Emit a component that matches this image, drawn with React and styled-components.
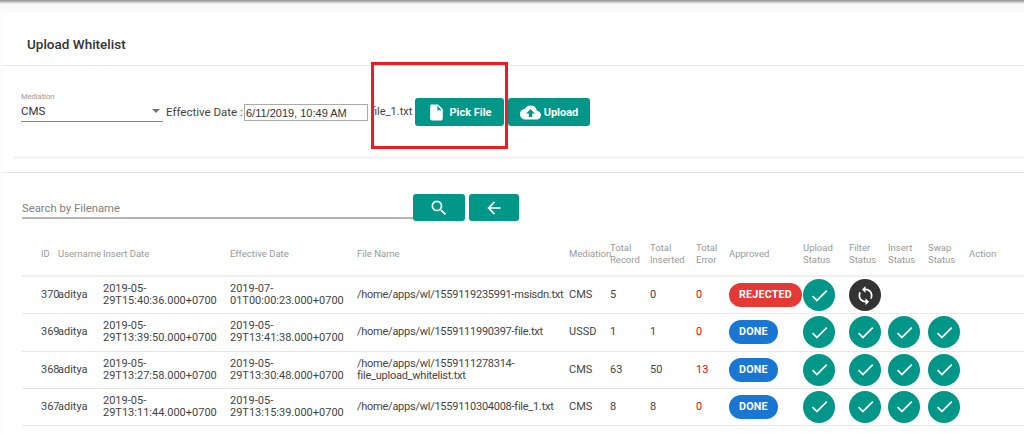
import React from "react";
import styled, { createGlobalStyle } from "styled-components";
import { MdArrowBack, MdCheck, MdSearch, MdSync, MdInsertDriveFile, MdCloudUpload } from "react-icons/md";

const GlobalStyle = createGlobalStyle`
  html, body {
    margin: 0;
    padding: 0;
    background: #fafafa;
    font-family: Roboto, "Liberation Sans", sans-serif;
    color: #333;
    overflow: hidden;
  }
`;

const columns = "19px 17px 45px 127px 127px 212px 41px 40px 46px 33px 74px 46px 39px 40px 41px 1fr";

const rows = [
  { id: 370, insert: ["2019-05-", "29T15:40:36.000+0700"], effective: ["2019-07-", "01T00:00:23.000+0700"], file: ["/home/apps/wl/1559119235991-msisdn.txt"], med: "CMS", record: 5, inserted: 0, error: 0, approved: "REJECTED", statuses: ["ok", "sync"] },
  { id: 369, insert: ["2019-05-", "29T13:39:50.000+0700"], effective: ["2019-05-", "29T13:41:38.000+0700"], file: ["/home/apps/wl/1559111990397-file.txt"], med: "USSD", record: 1, inserted: 1, error: 0, approved: "DONE", statuses: ["ok", "ok", "ok", "ok"] },
  { id: 368, insert: ["2019-05-", "29T13:27:58.000+0700"], effective: ["2019-05-", "29T13:30:48.000+0700"], file: ["/home/apps/wl/1559111278314-", "file_upload_whitelist.txt"], med: "CMS", record: 63, inserted: 50, error: 13, approved: "DONE", statuses: ["ok", "ok", "ok", "ok"] },
  { id: 367, insert: ["2019-05-", "29T13:11:44.000+0700"], effective: ["2019-05-", "29T13:15:39.000+0700"], file: ["/home/apps/wl/1559110304008-file_1.txt"], med: "CMS", record: 8, inserted: 8, error: 0, approved: "DONE", statuses: ["ok", "ok", "ok", "ok"] },
];

const headers = [
  ["ID"], ["Username"], ["Insert Date"], ["Effective Date"], ["File Name"], ["Mediation"],
  ["Total", "Record"], ["Total", "Inserted"], ["Total", "Error"], ["Approved"],
  ["Upload", "Status"], ["Filter", "Status"], ["Insert", "Status"], ["Swap", "Status"], ["Action"],
];

function Lines({ items }) {
  return items.map((line) => <Line key={line}>{line}</Line>);
}

export default function App() {
  return (
    <Page>
      <GlobalStyle />
      <Card>
        <Title>Upload Whitelist</Title>
        <FilterRow>
          <SelectField>
            <SelectLabel>Mediation</SelectLabel>
            <SelectValue>
              CMS
              <Caret />
            </SelectValue>
          </SelectField>
          <DateLabel>Effective Date :</DateLabel>
          <DateInput readOnly value="6/11/2019, 10:49 AM" />
          <FileName>file_1.txt</FileName>
          <ActionButton $width={89}>
            <MdInsertDriveFile size={19} />
            Pick File
          </ActionButton>
          <ActionButton $width={82}>
            <MdCloudUpload size={21} />
            Upload
          </ActionButton>
          <Highlight />
        </FilterRow>
        <Strip />
        <SearchRow>
          <SearchField>Search by Filename</SearchField>
          <IconButton $width={52}>
            <MdSearch size={20} />
          </IconButton>
          <IconButton $width={50}>
            <MdArrowBack size={20} />
          </IconButton>
        </SearchRow>
        <Table>
          <HeadRow>
            <span />
            {headers.map((h) => (
              <HeadCell key={h.join()}>
                <Lines items={h} />
              </HeadCell>
            ))}
          </HeadRow>
          {rows.map((r) => (
            <Row key={r.id}>
              <span />
              <Cell>{r.id}</Cell>
              <Cell>aditya</Cell>
              <Cell><Lines items={r.insert} /></Cell>
              <Cell><Lines items={r.effective} /></Cell>
              <FileCell><Lines items={r.file} /></FileCell>
              <Cell>{r.med}</Cell>
              <Cell>{r.record}</Cell>
              <Cell>{r.inserted}</Cell>
              <ErrorCell>{r.error}</ErrorCell>
              <Cell>
                <Badge $rejected={r.approved === "REJECTED"}>{r.approved}</Badge>
              </Cell>
              {[0, 1, 2, 3].map((i) => (
                <Cell key={i}>
                  {r.statuses[i] && (
                    <StatusIcon $sync={r.statuses[i] === "sync"}>
                      {r.statuses[i] === "sync" ? <MdSync size={21} /> : <MdCheck size={21} />}
                    </StatusIcon>
                  )}
                </Cell>
              ))}
              <Cell />
            </Row>
          ))}
        </Table>
      </Card>
    </Page>
  );
}

const Page = styled.div`
  height: 433px;
  box-sizing: border-box;
  padding: 12px 0 0 1px;
  overflow: hidden;
  background: linear-gradient(#8e8e8e, #c4c4c4 2px, #fafafa 4px) no-repeat;
  background-size: 100% 4px;
`;

const Card = styled.div`
  background: #fff;
  height: 100%;
`;

const Title = styled.div`
  height: 54px;
  box-sizing: border-box;
  padding: 25px 0 0 26px;
  font-size: 13.5px;
  line-height: 15px;
  font-weight: 500;
  color: #333;
  border-bottom: 1px solid #e8e8e8;
`;

const FilterRow = styled.div`
  position: relative;
  height: 90px;
  box-sizing: border-box;
  padding: 26px 0 0 20px;
  display: flex;
  align-items: flex-start;
`;

const SelectField = styled.div`
  width: 142px;
  margin-right: 3px;
`;

const SelectLabel = styled.div`
  font-size: 7.5px;
  line-height: 10px;
  color: #999;
`;

const SelectValue = styled.div`
  height: 20px;
  display: flex;
  justify-content: space-between;
  align-items: center;
  font-size: 11.5px;
  color: #333;
  border-bottom: 1px solid #888;
  padding-bottom: 1px;
  box-sizing: border-box;
`;

const Caret = styled.span`
  width: 0;
  height: 0;
  margin-right: 3px;
  border-left: 4px solid transparent;
  border-right: 4px solid transparent;
  border-top: 4px solid #757575;
`;

const DateLabel = styled.div`
  margin-top: 12px;
  font-size: 11.5px;
  line-height: 16px;
  color: #444;
  width: 78px;
  white-space: nowrap;
`;

const DateInput = styled.input`
  width: 124px;
  height: 17px;
  margin-top: 12px;
  box-sizing: border-box;
  border: 1px solid #aaa;
  padding: 0 1px;
  font-family: "Liberation Sans", Arial, sans-serif;
  font-size: 11px;
  color: #333;
  outline: none;
`;

const FileName = styled.div`
  margin: 12px 3px 0 3px;
  width: 41px;
  font-size: 11px;
  line-height: 16px;
  color: #444;
  white-space: nowrap;
`;

const ActionButton = styled.button`
  width: ${(p) => p.$width}px;
  height: 28px;
  margin: 6px 4px 0 0;
  padding: 0;
  display: flex;
  align-items: center;
  justify-content: center;
  gap: 3px;
  border: none;
  border-radius: 3px;
  background: #009688;
  color: #fff;
  font-family: Roboto, sans-serif;
  font-size: 11px;
  font-weight: 700;
`;

const Highlight = styled.div`
  position: absolute;
  left: 370px;
  top: -4px;
  width: 137px;
  height: 87px;
  box-sizing: border-box;
  border: 3px solid #ed1c24;
  pointer-events: none;
`;

const Strip = styled.div`
  height: 19px;
  box-sizing: border-box;
  margin-left: 13px;
  border-top: 3px solid #f5f5f5;
  position: relative;

  &::after {
    content: "";
    position: absolute;
    left: -13px;
    right: 0;
    top: 13px;
    border-top: 1px solid #e8e8e8;
  }
`;

const SearchRow = styled.div`
  height: 27px;
  margin-top: 19px;
  padding-left: 21px;
  display: flex;
  align-items: flex-start;
  gap: 4px;
`;

const SearchField = styled.div`
  width: 391px;
  height: 25px;
  margin-right: -4px;
  box-sizing: border-box;
  padding-top: 7px;
  font-size: 11.3px;
  line-height: 15px;
  color: #808080;
  border-bottom: 2px solid #b5b5b5;
`;

const IconButton = styled.button`
  width: ${(p) => p.$width}px;
  height: 27px;
  padding: 0;
  display: flex;
  align-items: center;
  justify-content: center;
  border: none;
  border-radius: 3px;
  background: #009688;
  color: #fff;
`;

const Table = styled.div`
  margin: 15px 0 0 21px;
`;

const HeadRow = styled.div`
  display: grid;
  grid-template-columns: ${columns};
  height: 41px;
  box-sizing: border-box;
  padding-bottom: 4px;
  align-items: center;
  border-bottom: 2px solid #efefef;
`;

const HeadCell = styled.div`
  font-size: 9.5px;
  line-height: 11.5px;
  color: #999;
`;

const Row = styled.div`
  display: grid;
  grid-template-columns: ${columns};
  height: 37.25px;
  box-sizing: border-box;
  align-items: center;
  border-bottom: 1px solid #e8e8e8;
`;

const Cell = styled.div`
  font-size: 11px;
  line-height: 12px;
  color: #444;
  white-space: nowrap;
`;

const FileCell = styled(Cell)`
  letter-spacing: -0.25px;
`;

const ErrorCell = styled(Cell)`
  color: #f00;
`;

const Line = styled.div``;

const Badge = styled.span`
  display: inline-block;
  height: 24px;
  line-height: 23px;
  box-sizing: border-box;
  padding: 0 10px;
  border-radius: 12px;
  background: ${(p) => (p.$rejected ? "#e53935" : "#1976d2")};
  color: #fff;
  font-size: 10.7px;
  font-weight: 700;
  letter-spacing: 0.2px;
`;

const StatusIcon = styled.span`
  display: flex;
  align-items: center;
  justify-content: center;
  width: 32px;
  height: 32px;
  border-radius: 50%;
  background: ${(p) => (p.$sync ? "#333" : "#009688")};
  color: #fff;
`;
